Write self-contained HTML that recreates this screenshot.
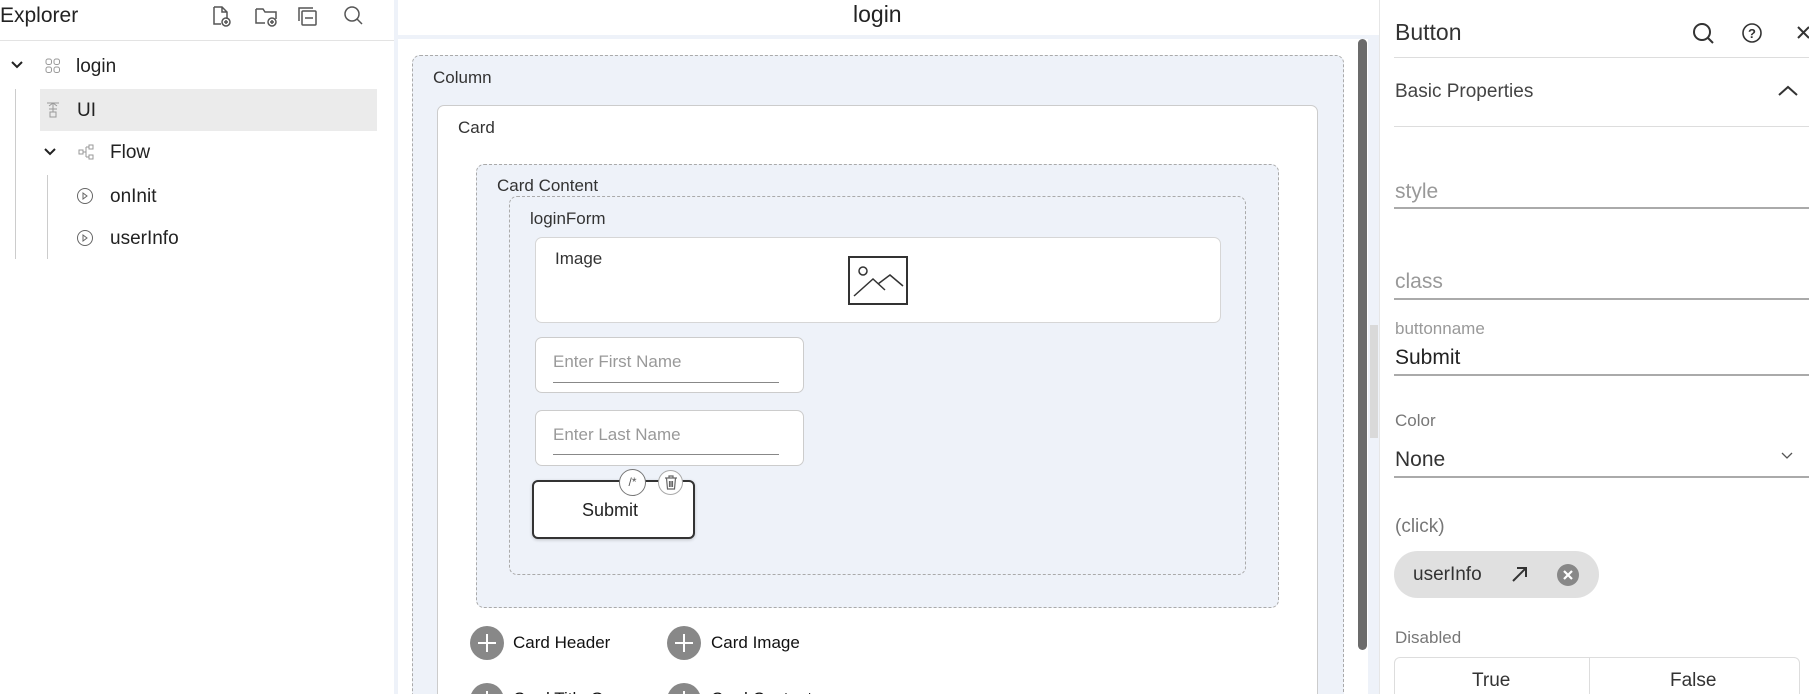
<!DOCTYPE html>
<html style="width:1809px;height:694px;overflow:hidden"><head><meta charset="utf-8"><style>
*{box-sizing:border-box;margin:0;padding:0}
html,body{width:1809px;height:694px;overflow:hidden}
body{background:#fff;font-family:"Liberation Sans",sans-serif;color:#333;position:relative}
.a{position:absolute}
.t{position:absolute;white-space:nowrap;line-height:1}
.dash{position:absolute;border:1px dashed #aaa;border-radius:8px;background:#eef2f9}
.box{position:absolute;border:1px solid #d6d6d6;border-radius:7px;background:#fff}
.plus{position:absolute;width:34px;height:34px;border-radius:50%;background:#888}
.plus:before{content:"";position:absolute;left:8px;top:16px;width:18px;height:1.5px;background:#fff}
.plus:after{content:"";position:absolute;left:16px;top:8px;width:1.5px;height:18px;background:#fff}
.ul{position:absolute;height:2px;background:#aaa}
</style></head><body>
<div class="a" style="left:0;top:0;width:1809px;height:694px;overflow:hidden">
<!-- left panel -->
<div class="t" style="left:0;top:5px;font-size:21px;color:#222">Explorer</div>
<svg class="a" style="left:210px;top:4px" width="160" height="24" fill="none" stroke="#555" stroke-width="1.5">
<path d="M4 3h8l5 5v7M4 3v17h7M12 3v5h5"/><circle cx="16" cy="18" r="4"/><path d="M16 16v4M14 18h4"/>
<path d="M46 5h7l2 3h11v7M46 5v14h9"/><circle cx="62" cy="18" r="4"/><path d="M62 16v4M60 18h4"/>
<rect x="92" y="7" width="14" height="14" rx="1"/><path d="M89 17V4h14"/><path d="M95 14h8"/>
<circle cx="142" cy="10" r="7"/><path d="M147 15l5 5"/></svg>
<div class="a" style="left:0;top:40px;width:394px;height:1px;background:#e3e3e3"></div>
<div class="a" style="left:394px;top:0;width:4px;height:694px;background:#eef2f9"></div>
<svg class="a" style="left:10px;top:60px" width="14" height="10" fill="none" stroke="#222" stroke-width="2"><path d="M2 2l5 5 5-5"/></svg>
<svg class="a" style="left:45px;top:58px" width="16" height="16" fill="none" stroke="#999" stroke-width="1"><rect x="1" y="1" width="5.5" height="5.5" rx="2"/><rect x="9" y="1" width="5.5" height="5.5" rx="2"/><rect x="1" y="9" width="5.5" height="5.5" rx="2"/><rect x="9" y="9" width="5.5" height="5.5" rx="2"/></svg>
<div class="t" style="left:76px;top:57px;font-size:19px;color:#222">login</div>
<div class="a" style="left:15px;top:89px;width:1px;height:170px;background:#ccc"></div>
<div class="a" style="left:40px;top:89px;width:337px;height:42px;background:#ebebeb"></div>
<svg class="a" style="left:45px;top:101px" width="16" height="18" fill="none" stroke="#999" stroke-width="1"><path d="M2 2h12M4 5l4-3 4 3M8 2v9M4 8h8M5 11h6v5H5z"/></svg>
<div class="t" style="left:77px;top:101px;font-size:19px;color:#222">UI</div>
<svg class="a" style="left:43px;top:147px" width="14" height="10" fill="none" stroke="#222" stroke-width="2"><path d="M2 2l5 5 5-5"/></svg>
<svg class="a" style="left:78px;top:144px" width="18" height="16" fill="none" stroke="#999" stroke-width="1"><rect x="1" y="6" width="4" height="4"/><rect x="11" y="1" width="4" height="4"/><rect x="11" y="11" width="4" height="4"/><path d="M5 8h3M8 3v10M8 3h3M8 13h3"/></svg>
<div class="t" style="left:110px;top:143px;font-size:19px;color:#222">Flow</div>
<div class="a" style="left:47px;top:175px;width:1px;height:84px;background:#ccc"></div>
<svg class="a" style="left:76px;top:187px" width="18" height="18" fill="none" stroke="#666" stroke-width="1"><circle cx="9" cy="9" r="7.5"/><path d="M7 6l4 3-4 3z"/></svg>
<div class="t" style="left:110px;top:187px;font-size:19px;color:#222">onInit</div>
<svg class="a" style="left:76px;top:229px" width="18" height="18" fill="none" stroke="#666" stroke-width="1"><circle cx="9" cy="9" r="7.5"/><path d="M7 6l4 3-4 3z"/></svg>
<div class="t" style="left:110px;top:229px;font-size:19px;color:#222">userInfo</div>

<!-- center -->
<div class="t" style="left:853px;top:3px;font-size:23px;color:#222">login</div>
<div class="a" style="left:398px;top:35px;width:981px;height:4px;background:#eef2f9"></div>
<div class="a" style="left:1368px;top:39px;width:11px;height:655px;background:#eef2f9"></div>
<div class="dash" style="left:412px;top:55px;width:932px;height:700px"></div>
<div class="t" style="left:433px;top:69px;font-size:17px">Column</div>
<div class="box" style="left:437px;top:105px;width:881px;height:650px;border-color:#ccc"></div>
<div class="t" style="left:458px;top:119px;font-size:17px">Card</div>
<div class="dash" style="left:476px;top:164px;width:803px;height:444px"></div>
<div class="t" style="left:497px;top:177px;font-size:17px">Card Content</div>
<div class="dash" style="left:509px;top:196px;width:737px;height:379px"></div>
<div class="t" style="left:530px;top:210px;font-size:17px">loginForm</div>
<div class="box" style="left:535px;top:237px;width:686px;height:86px"></div>
<div class="t" style="left:555px;top:250px;font-size:17px">Image</div>
<svg class="a" style="left:848px;top:256px" width="60" height="49" fill="none" stroke="#333" stroke-width="2"><rect x="1" y="1" width="58" height="47"/><circle cx="15" cy="15" r="4" stroke-width="1.5"/><path d="M6 40l19-17 12 11M30 28l12-9 13 11" stroke-width="1.5"/></svg>
<div class="box" style="left:535px;top:337px;width:269px;height:56px;border-color:#ccc"></div>
<div class="t" style="left:553px;top:353px;font-size:17px;color:#999">Enter First Name</div>
<div class="ul" style="left:553px;top:382px;width:226px;height:1px;background:#888"></div>
<div class="box" style="left:535px;top:410px;width:269px;height:56px;border-color:#ccc"></div>
<div class="t" style="left:553px;top:426px;font-size:17px;color:#999">Enter Last Name</div>
<div class="ul" style="left:553px;top:454px;width:226px;height:1px;background:#888"></div>
<div class="a" style="left:532px;top:480px;width:163px;height:59px;border:2px solid #333;border-radius:6px;background:#fff;box-shadow:0 1px 3px rgba(0,0,0,.2)"></div>
<div class="t" style="left:582px;top:501px;font-size:18px;color:#222">Submit</div>
<div class="a" style="left:619px;top:469px;width:27px;height:27px;border:1px solid #777;border-radius:50%;background:#fff;font-size:12px;text-align:center;line-height:25px;color:#555">/*</div>
<div class="a" style="left:658px;top:470px;width:25px;height:25px;border:1px solid #aaa;border-radius:50%;background:#fff"></div>
<svg class="a" style="left:663px;top:474px" width="16" height="17" fill="none" stroke="#666" stroke-width="1.2"><path d="M2 4h12M6 4V2h4v2M3.5 4l1 11h7l1-11M6.5 7v6M8 7v6M9.5 7v6"/></svg>
<div class="plus" style="left:470px;top:626px"></div>
<div class="t" style="left:513px;top:634px;font-size:17px;color:#111">Card Header</div>
<div class="plus" style="left:667px;top:626px"></div>
<div class="t" style="left:711px;top:634px;font-size:17px;color:#111">Card Image</div>
<div class="plus" style="left:470px;top:683px"></div>
<div class="t" style="left:513px;top:690px;font-size:17px;color:#111">Card Title Group</div>
<div class="plus" style="left:667px;top:683px"></div>
<div class="t" style="left:711px;top:690px;font-size:17px;color:#111">Card Content</div>
<div class="a" style="left:1358px;top:39px;width:9px;height:611px;border-radius:5px;background:#6b6b6b"></div>
<div class="a" style="left:1370px;top:325px;width:8px;height:113px;background:#d9d9d9"></div>
<div class="a" style="left:1379px;top:0;width:1px;height:694px;background:#e6e6e6"></div>

<!-- right -->
<div class="t" style="left:1395px;top:21px;font-size:23px;color:#333">Button</div>
<svg class="a" style="left:1690px;top:20px" width="119" height="26" fill="none" stroke="#333" stroke-width="2"><circle cx="12" cy="12" r="8"/><path d="M18 18l5 5"/><circle cx="62" cy="13" r="9" stroke-width="1.6"/><text x="62" y="18" font-size="13" font-family="Liberation Sans" text-anchor="middle" fill="#333" stroke="none" font-weight="bold">?</text><path d="M108 7l11 11M119 7l-11 11"/></svg>
<div class="a" style="left:1394px;top:57px;width:415px;height:1px;background:#ddd"></div>
<div class="t" style="left:1395px;top:82px;font-size:19px;color:#444">Basic Properties</div>
<svg class="a" style="left:1777px;top:85px" width="22" height="12" fill="none" stroke="#333" stroke-width="2"><path d="M2 10l9-8 9 8"/></svg>
<div class="a" style="left:1394px;top:126px;width:415px;height:1px;background:#ddd"></div>
<div class="t" style="left:1395px;top:181px;font-size:21px;color:#999">style</div>
<div class="ul" style="left:1394px;top:207px;width:415px"></div>
<div class="t" style="left:1395px;top:271px;font-size:21px;color:#999">class</div>
<div class="ul" style="left:1394px;top:298px;width:415px"></div>
<div class="t" style="left:1395px;top:320px;font-size:17px;color:#999">buttonname</div>
<div class="t" style="left:1395px;top:347px;font-size:21px;color:#222">Submit</div>
<div class="ul" style="left:1394px;top:374px;width:415px"></div>
<div class="t" style="left:1395px;top:412px;font-size:17px;color:#777">Color</div>
<div class="t" style="left:1395px;top:449px;font-size:21px;color:#333">None</div>
<svg class="a" style="left:1781px;top:452px" width="12" height="8" fill="none" stroke="#555" stroke-width="1.3"><path d="M1 1l5 5 5-5"/></svg>
<div class="ul" style="left:1394px;top:476px;width:415px"></div>
<div class="t" style="left:1395px;top:517px;font-size:19px;color:#777">(click)</div>
<div class="a" style="left:1394px;top:551px;width:205px;height:47px;border-radius:24px;background:#e0e0e0"></div>
<div class="t" style="left:1413px;top:565px;font-size:19px;color:#333">userInfo</div>
<svg class="a" style="left:1510px;top:564px" width="20" height="20" fill="none" stroke="#333" stroke-width="2"><path d="M3 17L16 4M7 4h9v9"/></svg>
<svg class="a" style="left:1556px;top:563px" width="24" height="24"><circle cx="12" cy="12" r="11" fill="#888"/><path d="M8 8l8 8M16 8l-8 8" stroke="#fff" stroke-width="2.2"/></svg>
<div class="t" style="left:1395px;top:629px;font-size:17px;color:#777">Disabled</div>
<div class="a" style="left:1394px;top:657px;width:406px;height:50px;border:1px solid #ddd;border-radius:6px"></div>
<div class="a" style="left:1589px;top:657px;width:1px;height:40px;background:#ddd"></div>
<div class="t" style="left:1472px;top:671px;font-size:19px;color:#333">True</div>
<div class="t" style="left:1670px;top:671px;font-size:19px;color:#333">False</div>
</div>
</body></html>
